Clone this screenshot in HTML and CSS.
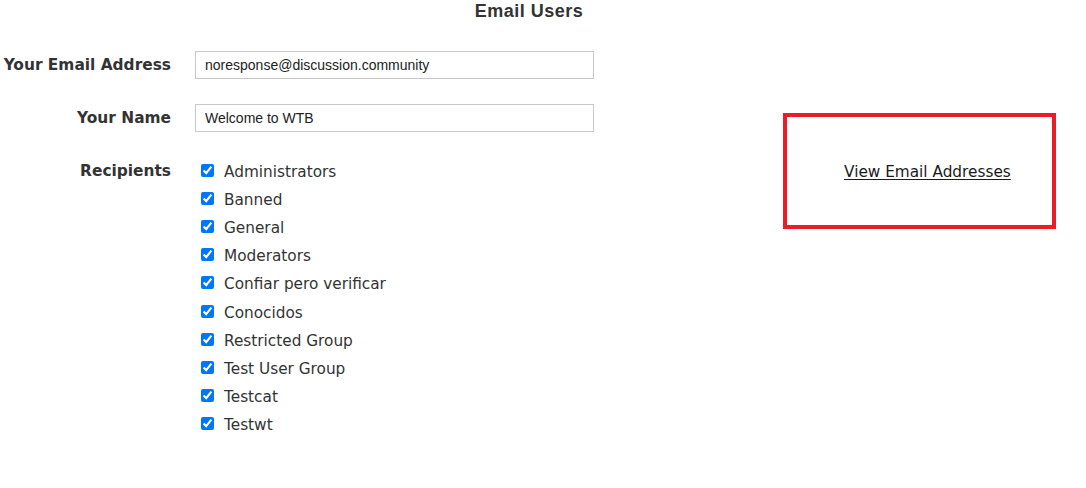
FILE: index.html
```html
<!DOCTYPE html>
<html>
<head>
<meta charset="utf-8">
<link rel="stylesheet" href="styles.css">
</head>
<body>
<h1 class="title">Email Users</h1>
<div class="main">
  <div class="form">
    <label class="label">Your Email Address</label>
    <input class="field" type="text" value="noresponse@discussion.community">
    <label class="label">Your Name</label>
    <input class="field" type="text" value="Welcome to WTB">
    <label class="label label-recipients">Recipients</label>
    <ul class="recipients">
      <li><input type="checkbox" checked><span>Administrators</span></li>
      <li><input type="checkbox" checked><span>Banned</span></li>
      <li><input type="checkbox" checked><span>General</span></li>
      <li><input type="checkbox" checked><span>Moderators</span></li>
      <li><input type="checkbox" checked><span>Confiar pero verificar</span></li>
      <li><input type="checkbox" checked><span>Conocidos</span></li>
      <li><input type="checkbox" checked><span>Restricted Group</span></li>
      <li><input type="checkbox" checked><span>Test User Group</span></li>
      <li><input type="checkbox" checked><span>Testcat</span></li>
      <li><input type="checkbox" checked><span>Testwt</span></li>
    </ul>
  </div>
  <div class="highlight">
    <a class="view-link" href="#">View Email Addresses</a>
  </div>
</div>
</body>
</html>
```

FILE: styles.css
```css
html, body {
  margin: 0;
  padding: 0;
  background: #ffffff;
}

body {
  width: 1086px;
  height: 488px;
  overflow: hidden;
  font-family: "DejaVu Sans", Verdana, sans-serif;
  color: #333333;
}

.title {
  margin: 0;
  width: 1058px;
  text-align: center;
  font-family: "Liberation Sans", Arial, sans-serif;
  font-size: 18px;
  font-weight: bold;
  letter-spacing: 0.5px;
  line-height: 22px;
  color: #333333;
}

.main {
  display: flex;
  align-items: flex-start;
  margin-top: 29px;
}

.form {
  display: grid;
  grid-template-columns: 171px 399px;
  column-gap: 24px;
  row-gap: 25px;
  align-items: start;
}

.label {
  font-family: "DejaVu Sans", Verdana, sans-serif;
  font-weight: bold;
  font-size: 15.4px;
  line-height: 28px;
  text-align: right;
  color: #333333;
  white-space: nowrap;
}

.label-recipients {
  margin-top: 0;
}

.field {
  box-sizing: border-box;
  width: 399px;
  height: 28px;
  margin: 0;
  padding: 0 9px;
  border: 1px solid #c8c8c8;
  border-radius: 0;
  font-family: "Liberation Sans", Arial, sans-serif;
  font-size: 14px;
  color: #222222;
  outline: none;
}

.recipients {
  list-style: none;
  margin: 0;
  padding: 0 0 0 6px;
}

.recipients li {
  display: flex;
  align-items: center;
  height: 28.2px;
  gap: 10px;
  font-size: 15.3px;
  color: #333333;
}

.recipients input {
  width: 13px;
  height: 13px;
  margin: -2px 0 0 0;
  accent-color: #0075ff;
}

.recipients span {
  margin-top: 1px;
}

.highlight {
  box-sizing: border-box;
  width: 273px;
  height: 116px;
  margin-top: 62px;
  margin-left: 189px;
  border: 4px solid #ec1c24;
  padding: 44px 0 0 57px;
}

.view-link {
  font-size: 15.3px;
  line-height: 22px;
  color: #1a1a1a;
  text-decoration: underline;
  text-underline-offset: 2px;
}
```
